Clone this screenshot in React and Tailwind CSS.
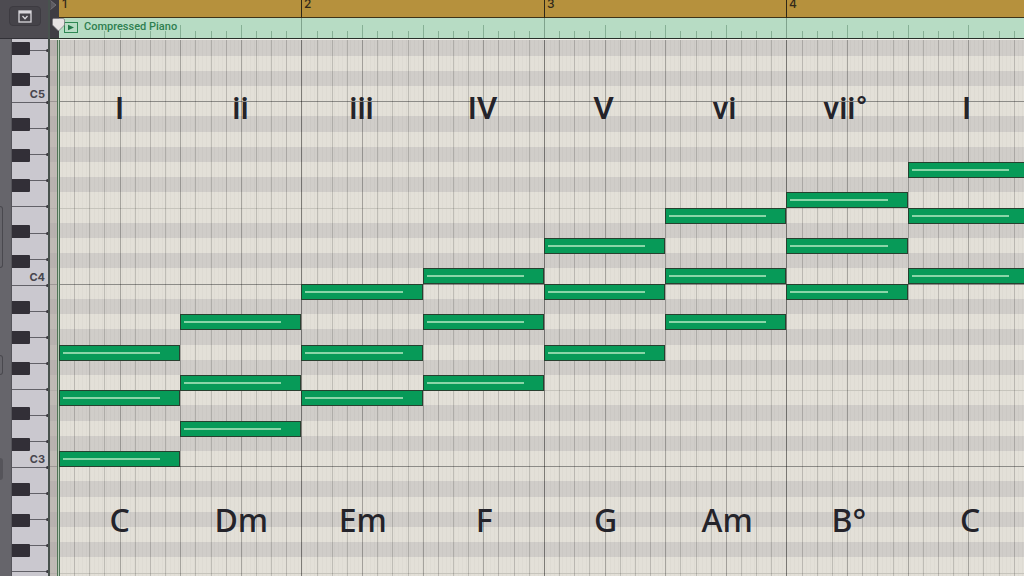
import React from "react";

const ROW = 15.21;
const STEP = 15.155;
const TOP_PITCH = 75;
const STEP_COUNT = 128;
const ORIGIN = 9;

const BLACK = [1, 3, 6, 8, 10];
const isBlack = (pitch) => BLACK.includes(pitch % 12);

const rowTop = (i) => Math.round(i * ROW + 0.3);
const stepLeft = (i) => ORIGIN + Math.round(i * STEP);

const rows = Array.from({ length: 60 }, (_, i) => ({
  pitch: TOP_PITCH - i,
  top: rowTop(i),
  height: rowTop(i + 1) - rowTop(i),
}));
const steps = Array.from({ length: STEP_COUNT }, (_, i) => i);

const chords = [
  { numeral: "I", name: "C", notes: [48, 52, 55] },
  { numeral: "ii", name: "Dm", notes: [50, 53, 57] },
  { numeral: "iii", name: "Em", notes: [52, 55, 59] },
  { numeral: "IV", name: "F", notes: [53, 57, 60] },
  { numeral: "V", name: "G", notes: [55, 59, 62] },
  { numeral: "vi", name: "Am", notes: [57, 60, 64] },
  { numeral: "vii°", name: "B°", notes: [59, 62, 65] },
  { numeral: "I", name: "C", notes: [60, 64, 67] },
];

// white keys are evenly spaced, seven to an octave
const whiteKeys = [];
for (let pitch = 76, i = 0; pitch > 24; pitch--) {
  if (isBlack(pitch)) continue;
  const edge = (n) => Math.round(12 + (n * ROW * 12) / 7);
  whiteKeys.push({ pitch, height: i === 0 ? edge(0) : edge(i) - edge(i - 1) });
  i++;
}

const Keyboard = () => {
  return (
    <div className="relative w-9 shrink-0 bg-[#cac8cf]">
      {whiteKeys.map((key) => (
        <div
          key={key.pitch}
          className="relative flex items-end justify-end border-b border-[#626168] pr-[3px]"
          style={{ height: key.height }}
        >
          {key.pitch % 12 === 0 && (
            <span className="text-[11px] leading-4 font-bold text-[#47454d]">
              C{key.pitch / 12 - 1}
            </span>
          )}
          <i className="absolute right-0 -bottom-0.5 h-[3px] w-0.5 rounded-l bg-[#3b3a40]" />
        </div>
      ))}
      {rows
        .filter((row) => isBlack(row.pitch))
        .map((row) => (
          <div
            key={row.pitch}
            className="absolute left-0 h-[13px] w-[18px] rounded-r-[1px] bg-[#322f37]"
            style={{ top: row.top + 3 }}
          />
        ))}
    </div>
  );
};

const Ruler = () => {
  return (
    <div className="relative h-[39px] shrink-0 overflow-hidden border-b border-[#28302a] bg-[#3f3c43]">
      <div className="ml-[9px] h-[18px] border-b border-[#3e3319] bg-[#b6913d]" />
      <div className="ml-[9px] flex h-5 items-center gap-1.5 bg-[#b7dcc4] pb-0.5 pl-[5px]">
        <svg width="14" height="11" viewBox="0 0 14 11">
          <rect x="0.5" y="0.5" width="13" height="10" fill="none" stroke="#2f8753" />
          <path d="M4 2.8 L10 5.5 L4 8.2 Z" fill="#23794a" />
        </svg>
        <span className="font-['Roboto',sans-serif] text-[11px] leading-4 font-medium text-[#2f7f50]">
          Compressed Piano
        </span>
      </div>
      <svg className="absolute inset-0 h-full w-full" shapeRendering="crispEdges">
        {steps.slice(3).map((i) => {
          const x = stepLeft(i);
          if (i % 16 === 0) {
            return (
              <g key={i}>
                <rect x={x} y="0" width="1" height="18" fill="#2e2717" />
                <rect x={x} y="18" width="1" height="20" fill="#7fa38d" />
              </g>
            );
          }
          const top = i % 4 === 0 && i > 7 ? 25 : 31;
          return (
            <rect key={i} x={x} y={top} width="1" height={38 - top} fill="#86b095" />
          );
        })}
      </svg>
      {steps
        .filter((i) => i % 16 === 0)
        .map((i) => (
          <span
            key={i}
            className="absolute top-0 pl-[3px] text-xs leading-2 font-medium text-[#32291a]"
            style={{ left: stepLeft(i) }}
          >
            {i / 16 + 1}
          </span>
        ))}
      <svg className="absolute top-0 left-0" width="16" height="37" viewBox="0 0 16 37">
        <path d="M0.5 0.5 L6 5 L0.5 9.5" fill="#5d5b61" stroke="#85838a" strokeWidth="0.7" />
        <path
          d="M3.5 18.5 H13 Q14.5 18.5 14.5 20 V25 L8.5 31 L2.5 25 V20 Q2.5 18.5 3.5 18.5 Z"
          fill="#e7e2e3"
          stroke="#77737a"
          strokeWidth="0.7"
        />
      </svg>
    </div>
  );
};

const Labels = ({ field, className }) => {
  return (
    <div
      className={`absolute grid auto-cols-fr grid-flow-col text-center text-[32px] leading-10 font-medium text-[#24232a] ${className}`}
    >
      {chords.map((chord, i) => (
        <span key={i}>{chord[field]}</span>
      ))}
    </div>
  );
};

const Grid = () => {
  return (
    <div className="relative min-h-0 flex-1 overflow-hidden border-t border-[#f1efe9]">
      {rows.map((row) => (
        <div
          key={row.pitch}
          className={isBlack(row.pitch) ? "bg-[#d0cdc9]" : "bg-[#e3e0d8]"}
          style={{ height: row.height }}
        />
      ))}
      <svg className="absolute inset-0 h-full w-full" shapeRendering="crispEdges">
        <defs>
          <pattern id="fine" width="4" height="4" patternUnits="userSpaceOnUse">
            <rect width="1" height="4" fill="#000" fillOpacity="0.025" />
          </pattern>
        </defs>
        <rect width="100%" height="100%" fill="url(#fine)" />
        {rows.map((row) => {
          const y = row.top + row.height;
          if (row.pitch % 12 === 0) {
            return (
              <rect key={row.pitch} y={y} width="100%" height="1" fill="#8c8b87" />
            );
          }
          if (row.pitch % 12 === 5) {
            return (
              <rect key={row.pitch} y={y} width="100%" height="1" fill="#c6c4bc" />
            );
          }
          return null;
        })}
        {steps.map((i) => (
          <rect
            key={i}
            x={stepLeft(i)}
            width="1"
            height="100%"
            fill="#000"
            fillOpacity={i % 16 === 0 ? 0.45 : i % 4 === 0 ? 0.27 : 0.16}
          />
        ))}
      </svg>
      <div className="absolute inset-y-0 left-0 w-[7px] bg-[#a8a09f]/60" />
      <div className="absolute inset-y-0 left-[7px] w-[3px] border-x border-[#527457] bg-[#b9ccb8]" />
      {chords.map((chord, i) => {
        const left = stepLeft(i * 8);
        const width = stepLeft(i * 8 + 8) - left;
        return chord.notes.map((pitch) => (
          <div
            key={`${i}-${pitch}`}
            className="absolute flex items-center border border-[#27402f] bg-[#079a58] pr-[19px] pl-[3px]"
            style={{ left, width, top: rowTop(TOP_PITCH - pitch), height: 16 }}
          >
            <div className="h-0.5 flex-1 bg-[#8ad5a8]" />
          </div>
        ));
      })}
      <Labels
        field="numeral"
        className="top-12 left-[9px] w-[968px] font-['Roboto',sans-serif]"
      />
      <Labels
        field="name"
        className="top-[460px] left-[9px] w-[972px] font-['Noto_Sans',sans-serif]"
      />
    </div>
  );
};

const App = () => {
  return (
    <div className="flex h-screen overflow-hidden bg-[#66656b] font-['Inter',sans-serif]">
      <div className="flex shrink-0 flex-col">
        <div className="flex h-[39px] w-12 shrink-0 items-start border-b border-[#323137] bg-[#4d4b51] pt-1.5 pl-[9px]">
          <button
            aria-label="Toggle menu"
            className="flex h-5 w-8 items-center justify-center rounded border border-[#3d3b41] bg-[#454349]"
          >
            <svg width="14" height="13" viewBox="0 0 14 13">
              <rect x="1" y="1" width="12" height="11" fill="none" stroke="#d9d7dc" strokeWidth="1.3" />
              <rect x="1" y="1" width="12" height="2.5" fill="#d9d7dc" />
              <path d="M4.5 6 L7 8.8 L9.5 6" fill="none" stroke="#d9d7dc" strokeWidth="1.3" />
            </svg>
          </button>
        </div>
        <div className="flex min-h-0 flex-1 overflow-hidden">
          <div className="w-3 shrink-0 border-r border-[#55545a]">
            <div className="mt-[167px] h-[62px] w-[3px] rounded-r-[3px] border border-l-0 border-[#49484e]" />
            <div className="mt-[87px] h-5 w-[3px] rounded-r-[3px] border border-l-0 border-[#49484e]" />
            <div className="mt-[83px] h-[22px] w-[3px] rounded-r-[3px] bg-[#55545a]" />
          </div>
          <Keyboard />
        </div>
      </div>
      <div className="w-0.5 shrink-0 bg-[#48524e]" />
      <div className="flex min-w-0 flex-1 flex-col">
        <Ruler />
        <Grid />
      </div>
    </div>
  );
};

export default App;
